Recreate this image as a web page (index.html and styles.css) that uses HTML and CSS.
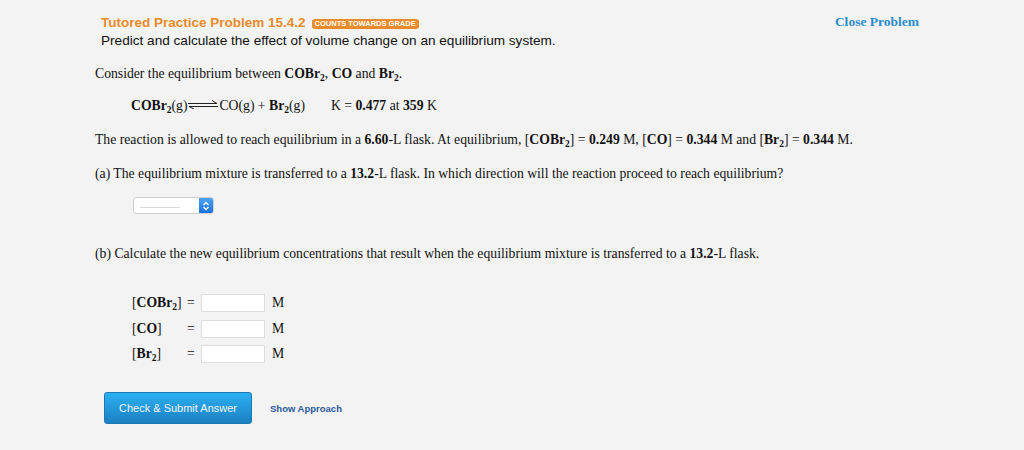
FILE: index.html
```html
<!DOCTYPE html>
<html>
<head>
<meta charset="utf-8">
<link rel="stylesheet" href="styles.css">
</head>
<body>
<div class="page">
  <div class="header">
    <div class="head-left">
      <div class="title-row">
        <span class="title">Tutored Practice Problem 15.4.2</span>
        <span class="badge">COUNTS TOWARDS GRADE</span>
      </div>
      <div class="subtitle">Predict and calculate the effect of volume change on an equilibrium system.</div>
    </div>
    <a class="close">Close Problem</a>
  </div>

  <div class="body">
    <p class="line l1">Consider the equilibrium between <b>COBr<sub>2</sub></b>, <b>CO</b> and <b>Br<sub>2</sub></b>.</p>
    <p class="line eq"><span><b>COBr<sub>2</sub></b>(g)<svg class="arrow" width="30" height="9" viewBox="0 0 30 9"><path d="M0 3.5H29M29 3.5L24 0.5" stroke="#222" stroke-width="1" fill="none"/><path d="M1 6.5H30M1 6.5L6 9" stroke="#222" stroke-width="1" fill="none"/></svg>CO(g) + <b>Br<sub>2</sub></b>(g)</span><span class="k">K = <b>0.477</b> at <b>359</b> K</span></p>
    <p class="line l3">The reaction is allowed to reach equilibrium in a <b>6.60</b>-L flask. At equilibrium, [<b>COBr<sub>2</sub></b>] = <b>0.249</b> M, [<b>CO</b>] = <b>0.344</b> M and [<b>Br<sub>2</sub></b>] = <b>0.344</b> M.</p>
    <p class="line l4">(a) The equilibrium mixture is transferred to a <b>13.2</b>-L flask. In which direction will the reaction proceed to reach equilibrium?</p>
    <div class="select">
      <span class="sel-text">__________</span>
      <span class="sel-btn"><svg width="8" height="10" viewBox="0 0 8 10"><path d="M1.5 4L4 1.5L6.5 4M1.5 6L4 8.5L6.5 6" stroke="#fff" stroke-width="1.3" fill="none"/></svg></span>
    </div>
    <p class="line l5">(b) Calculate the new equilibrium concentrations that result when the equilibrium mixture is transferred to a <b>13.2</b>-L flask.</p>
    <div class="answers">
      <div class="row"><span class="lab">[<b>COBr<sub>2</sub></b>]</span><span class="eqs">=</span><span class="inp"></span><span class="unit">M</span></div>
      <div class="row"><span class="lab">[<b>CO</b>]</span><span class="eqs">=</span><span class="inp"></span><span class="unit">M</span></div>
      <div class="row"><span class="lab">[<b>Br<sub>2</sub></b>]</span><span class="eqs">=</span><span class="inp"></span><span class="unit">M</span></div>
    </div>
    <div class="actions">
      <button class="submit">Check &amp; Submit Answer</button>
      <a class="approach">Show Approach</a>
    </div>
  </div>
</div>
</body>
</html>
```
FILE: styles.css
```css
html, body { margin: 0; padding: 0; }
body { background: #f3f3f3; width: 1024px; height: 450px; overflow: hidden; }
.page { padding: 14px 0 0 0; }
.header { display: flex; justify-content: space-between; padding-left: 101px; padding-right: 105px; }
.title-row { display: flex; align-items: center; gap: 6px; height: 17px; }
.title { font-family: "Liberation Sans", Arial, sans-serif; font-weight: bold; font-size: 13.5px; color: #e98b2a; }
.badge { background: #e98b2a; color: #fff; font-family: "Liberation Sans", Arial, sans-serif; font-weight: bold; font-size: 7.5px; padding: 1px 3px; border-radius: 3px; line-height: 8px; margin-top: 2px; }
.subtitle { font-family: "Liberation Sans", Arial, sans-serif; font-size: 13.6px; color: #111; margin-top: 2px; }
.close { font-family: "Liberation Serif", "Times New Roman", serif; font-weight: bold; font-size: 13.5px; color: #2b8ccc; margin-top: 0; }
.body { padding-left: 95px; font-family: "Liberation Serif", "Times New Roman", serif; font-size: 13.7px; color: #111; }
.line { margin: 0; line-height: 16px; }
sub { font-size: 9.5px; line-height: 0; vertical-align: -2.5px; }
.l1 { margin-top: 18px; }
.eq { margin-top: 16px; padding-left: 36px; display: flex; }
.eq .k { margin-left: 26px; }
.arrow { vertical-align: 1px; margin: 0 1px; }
.l3 { margin-top: 18px; }
.l4 { margin-top: 18px; }
.select { margin-top: 15px; margin-left: 38px; width: 81px; height: 17px; display: flex; background: #fff; border: 1px solid #cfcfcf; border-radius: 3px; box-sizing: border-box; overflow: hidden; }
.sel-text { flex: 1; color: #bbb; font-family: "Liberation Sans", Arial, sans-serif; font-size: 8px; line-height: 12px; padding-left: 6px; letter-spacing: -0.5px; }
.sel-btn { width: 14px; background: linear-gradient(#4da3f4, #1a73e0); display: flex; align-items: center; justify-content: center; }
.l5 { margin-top: 32px; }
.answers { margin-top: 32px; padding-left: 37px; display: flex; flex-direction: column; gap: 7.5px; }
.row { display: flex; align-items: center; height: 18px; }
.lab { width: 55px; }
.eqs { width: 14px; }
.inp { width: 64px; height: 18px; background: #fff; border: 1px solid #ddd; box-sizing: border-box; }
.unit { margin-left: 7px; }
.actions { margin-top: 29px; padding-left: 9px; display: flex; align-items: center; gap: 18px; }
.submit { width: 148px; height: 32px; border: 1px solid #1b78b8; border-radius: 3px; background: linear-gradient(#2cb0f0, #1b80c2); color: #f0f4f8; font-family: "Liberation Sans", Arial, sans-serif; font-size: 11px; padding: 0; }
.approach { font-family: "Liberation Sans", Arial, sans-serif; font-weight: bold; font-size: 9.5px; color: #2a5a9a; }
```
